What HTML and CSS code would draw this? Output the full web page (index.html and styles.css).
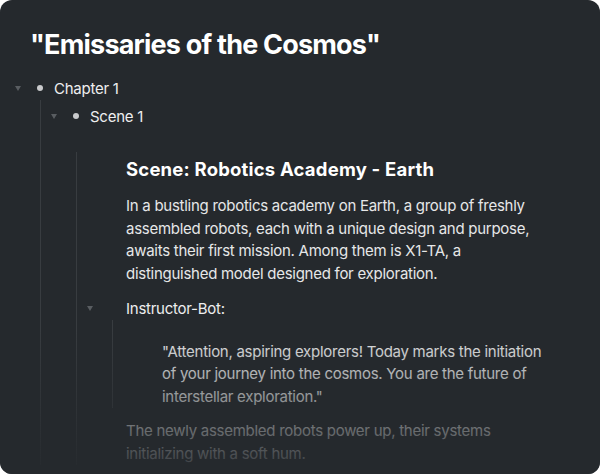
FILE: index.html
```html
<!DOCTYPE html>
<html lang="en">
<head>
<meta charset="utf-8">
<title>Emissaries of the Cosmos</title>
<link rel="stylesheet" href="styles.css">
</head>
<body>
<div class="app">
  <h1 class="title">"Emissaries of the Cosmos"</h1>
  <div class="node">
    <div class="row">
      <span class="toggle"><span class="tri"></span></span>
      <span class="bullet-slot"><span class="bullet"></span></span>
      <span class="label">Chapter 1</span>
    </div>
    <div class="children ch-chapter">
      <div class="node">
        <div class="row">
          <span class="toggle"><span class="tri"></span></span>
          <span class="bullet-slot"><span class="bullet"></span></span>
          <span class="label">Scene 1</span>
        </div>
        <div class="children ch-scene">
          <h2 class="block heading">Scene: Robotics Academy - Earth</h2>
          <p class="block para">In a bustling robotics academy on Earth, a group of freshly assembled robots, each with a unique design and purpose, awaits their first mission. Among them is X1-TA, a distinguished model designed for exploration.</p>
          <div class="node">
            <div class="row">
              <span class="toggle"><span class="tri"></span></span>
              <span class="bullet-slot"></span>
              <span class="label">Instructor-Bot:</span>
            </div>
            <div class="children ch-speaker">
              <p class="block para">"Attention, aspiring explorers! Today marks the initiation of your journey into the cosmos. You are the future of interstellar exploration."</p>
            </div>
          </div>
          <p class="block para after">The newly assembled robots power up, their systems initializing with a soft hum.</p>
        </div>
      </div>
    </div>
  </div>
  <div class="fade"></div>
</div>
</body>
</html>
```

FILE: styles.css
```css
* { box-sizing: border-box; }

html, body {
  margin: 0;
  padding: 0;
  background: #ffffff;
}

body {
  font-family: Inter, "Noto Sans", "Liberation Sans", sans-serif;
  color: #e6e7e8;
}

.app {
  position: relative;
  width: 600px;
  height: 474px;
  overflow: hidden;
  background: #25292d;
  border-radius: 12px;
  padding: 28px 50px 0 7px;
}

.title {
  margin: 0 0 15px 23px;
  font-size: 27px;
  line-height: 34px;
  font-weight: 700;
  letter-spacing: -0.8px;
  color: #ffffff;
}

.row {
  display: flex;
  align-items: center;
  height: 22.5px;
  font-size: 15px;
  letter-spacing: -0.25px;
  color: #eeeeef;
}

.toggle,
.bullet-slot {
  width: 22px;
  height: 22.5px;
  display: flex;
  align-items: center;
  justify-content: center;
  flex: none;
}

.tri {
  width: 0;
  height: 0;
  border-left: 3.5px solid transparent;
  border-right: 3.5px solid transparent;
  border-top: 5px solid #595d61;
}

.bullet {
  width: 6px;
  height: 6px;
  border-radius: 50%;
  background: #c9cacc;
}

.label {
  margin-left: 3px;
  white-space: nowrap;
}

.children {
  margin-left: 33px;
  border-left: 1px solid #383c40;
  padding-left: 2px;
}

.ch-chapter { padding-top: 5.5px; }
.ch-scene { margin-top: 24.5px; padding-top: 4px; }
.ch-speaker { padding-top: 20.7px; }

.block {
  margin: 0;
  padding-left: 47px;
}

.heading {
  font-size: 18.5px;
  line-height: 27px;
  font-weight: 700;
  letter-spacing: 0.2px;
  color: #ffffff;
}

.para {
  font-size: 15px;
  line-height: 22.5px;
  letter-spacing: -0.27px;
  color: #e6e7e8;
}

.heading + .para { margin-top: 12.3px; }
.para + .node { margin-top: 12.3px; }
.node + .after { margin-top: 12px; }

.fade {
  position: absolute;
  left: 0;
  right: 0;
  bottom: 0;
  height: 144px;
  background: linear-gradient(to bottom, rgba(37, 41, 45, 0) 0%, rgba(37, 41, 45, 0.92) 100%);
  pointer-events: none;
}
```
